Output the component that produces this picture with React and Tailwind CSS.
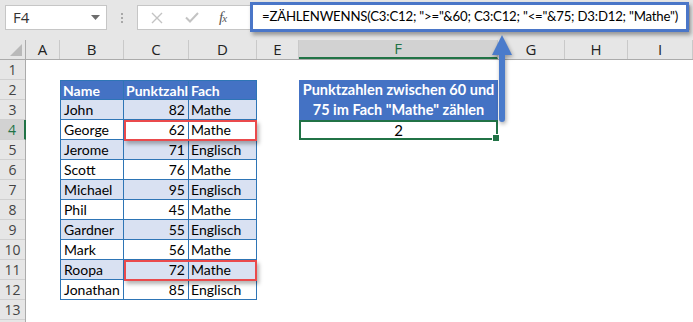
import React from 'react';

const cols = ['A', 'B', 'C', 'D', 'E', 'F', 'G', 'H', 'I'];
const colWidths = ['w-[34px]', 'w-[64px]', 'w-[65px]', 'w-[68px]', 'w-[42px]', 'w-[199px]', 'w-[67px]', 'w-[63px]', 'flex-1'];

const rows = [
  { name: 'John', score: 82, subject: 'Mathe' },
  { name: 'George', score: 62, subject: 'Mathe' },
  { name: 'Jerome', score: 71, subject: 'Englisch' },
  { name: 'Scott', score: 76, subject: 'Mathe' },
  { name: 'Michael', score: 95, subject: 'Englisch' },
  { name: 'Phil', score: 45, subject: 'Mathe' },
  { name: 'Gardner', score: 55, subject: 'Englisch' },
  { name: 'Mark', score: 56, subject: 'Mathe' },
  { name: 'Roopa', score: 72, subject: 'Mathe' },
  { name: 'Jonathan', score: 85, subject: 'Englisch' },
];

const FORMULA = '=ZÄHLENWENNS(C3:C12; ">="&60; C3:C12; "<="&75; D3:D12; "Mathe")';

function Toolbar() {
  return (
    <div className="h-[40px] bg-[#e6e6e6] flex items-start pt-[5px] pl-[5px] pr-[3px]">
      {/* Name box */}
      <div className="w-[102px] shrink-0 h-[25px] bg-white border border-[#c6c6c6] flex items-center justify-between pl-[7px] pr-[6px] text-[15px] text-[#333] font-['Open_Sans',sans-serif]">
        <span>F4</span>
        <svg width="9" height="5" viewBox="0 0 9 5"><path d="M0 0h9L4.5 5z" fill="#6d6d6d" /></svg>
      </div>
      <div className="w-[30px] shrink-0 h-[25px] flex flex-col items-center justify-center gap-[2px]">
        <span className="w-[2px] h-[2px] bg-[#a8a8a8]" />
        <span className="w-[2px] h-[2px] bg-[#a8a8a8]" />
        <span className="w-[2px] h-[2px] bg-[#a8a8a8]" />
      </div>
      {/* Formula bar */}
      <div className="flex-1 min-w-0 h-[25px] bg-white border border-[#c6c6c6] flex items-center">
        <div className="w-[112px] flex items-center shrink-0">
          <svg className="ml-[13px]" width="12" height="12" viewBox="0 0 12 12">
            <path d="M1 1l10 10M11 1L1 11" stroke="#c3c3c3" strokeWidth="1.4" />
          </svg>
          <svg className="ml-[22px]" width="14" height="11" viewBox="0 0 14 11">
            <path d="M1 5.5l4 4L13 1" stroke="#c3c3c3" strokeWidth="2" fill="none" />
          </svg>
          <span className="ml-[20px] italic text-[15px] text-[#555] font-['Liberation_Serif',serif] tracking-[-1px]">
            f<span className="text-[11px]">x</span>
          </span>
        </div>
        <div className="flex-1 min-w-0 h-[30px] -mt-[3px] -mb-[2px] border-[3px] border-[#4a76c8] bg-white shadow-[2px_3px_4px_rgba(0,0,0,0.35)] flex items-center pl-[9px] text-[13.2px] tracking-[-0.2px] text-black font-['Lato',sans-serif] whitespace-nowrap overflow-hidden">
          {FORMULA}
        </div>
      </div>
    </div>
  );
}

function ColHeaders() {
  return (
    <div className="h-[20px] flex bg-[#e6e6e6] border-b border-[#ababab] text-[15px] text-[#222] font-['Open_Sans',sans-serif]">
      <div className="w-[26px] shrink-0 border-r border-[#ababab] relative">
        <svg className="absolute right-[3px] bottom-[3px]" width="12" height="12" viewBox="0 0 12 12">
          <path d="M12 0v12H0z" fill="#b9b9b9" />
        </svg>
      </div>
      {cols.map((c, i) => {
        const active = c === 'F';
        return (
          <div
            key={c}
            className={`${colWidths[i]} shrink-0 flex items-center justify-center border-r border-[#c9c9c9] ${active ? 'bg-[#d2d2d2] border-b-2 border-b-[#217346] text-[#217346]' : ''}`}
          >
            {c}
          </div>
        );
      })}
    </div>
  );
}

function Cell({ className = '', children }) {
  return <div className={`h-[20px] flex items-center overflow-hidden whitespace-nowrap ${className}`}>{children}</div>;
}

function Sheet() {
  const rowNums = Array.from({ length: 13 }, (_, i) => i + 1);
  return (
    <div className="flex">
      {/* Row headers */}
      <div className="w-[26px] shrink-0 flex flex-col bg-[#e6e6e6] border-r border-[#ababab] text-[14px] text-[#444] font-['Open_Sans',sans-serif]">
        {rowNums.map((n) => (
          <div
            key={n}
            className={`h-[20px] shrink-0 flex items-center justify-center border-b border-[#d0d0d0] ${n === 4 ? 'bg-[#d2d2d2] text-[#217346] border-r-2 border-r-[#217346] -mr-px' : ''}`}
          >
            {n}
          </div>
        ))}
        <div className="h-[2px]" />
      </div>

      {/* Cells */}
      <div className="flex-1 grid grid-cols-[34px_64px_65px_68px_42px_199px_1fr] grid-rows-[repeat(13,20px)] text-[14px] text-black font-['Lato',sans-serif]">
        {/* Data table B2:D12 */}
        <div className="col-start-2 col-span-3 row-start-2 row-span-11 grid grid-cols-[64px_65px_68px] grid-rows-[repeat(11,20px)]">
          <Cell className="bg-[#4472c4] text-white font-bold px-[2px] border border-[#2e75b6]">Name</Cell>
          <Cell className="bg-[#4472c4] text-white font-bold px-[2px] border-y border-r border-[#2e75b6]">Punktzahl</Cell>
          <Cell className="bg-[#4472c4] text-white font-bold px-[2px] border-y border-r border-[#2e75b6]">Fach</Cell>
          {rows.map((r, i) => {
            const bg = i % 2 === 0 ? 'bg-[#d9e1f2]' : 'bg-white';
            return (
              <React.Fragment key={r.name}>
                <Cell className={`${bg} px-[3px] border-x border-b border-[#2e75b6]`}>{r.name}</Cell>
                <Cell className={`${bg} px-[3px] justify-end border-r border-b border-[#2e75b6]`}>{r.score}</Cell>
                <Cell className={`${bg} px-[2px] border-r border-b border-[#2e75b6]`}>{r.subject}</Cell>
              </React.Fragment>
            );
          })}
        </div>

        {/* Result header F2:F3 */}
        <div className="col-start-6 row-start-2 row-span-2 bg-[#4472c4] text-white font-bold text-[14.5px] leading-[20px] flex flex-col items-center justify-center text-center">
          <span>Punktzahlen zwischen 60 und</span>
          <span>75 im Fach "Mathe" zählen</span>
        </div>

        {/* Result F4 */}
        <div className="col-start-6 row-start-4 relative border-2 border-[#217346] flex items-center justify-center text-[15px]">
          2
          <span className="absolute -right-[4px] -bottom-[4px] w-[6px] h-[6px] bg-[#217346] border border-white box-content" />
        </div>
      </div>
    </div>
  );
}

export default function App() {
  return (
    <div className="relative w-[693px] h-[322px] overflow-hidden bg-white select-none">
      <Toolbar />
      <ColHeaders />
      <Sheet />

      {/* Red highlight boxes */}
      <div className="absolute left-[124px] top-[120px] w-[133px] h-[21px] border-2 border-[#ea4a4c] shadow-[2px_3px_4px_rgba(0,0,0,0.3)]" />
      <div className="absolute left-[124px] top-[260px] w-[133px] h-[21px] border-2 border-[#ea4a4c] shadow-[2px_3px_4px_rgba(0,0,0,0.3)]" />

      {/* Arrow from result to formula */}
      <svg className="absolute left-[490px] top-[34px] drop-shadow-[1px_2px_2px_rgba(0,0,0,0.35)]" width="24" height="92" viewBox="0 0 24 92">
        <path d="M12 1L22 21H15V85a3 3 0 0 1-6 0V21H2z" fill="#4a7bcb" />
      </svg>
    </div>
  );
}
